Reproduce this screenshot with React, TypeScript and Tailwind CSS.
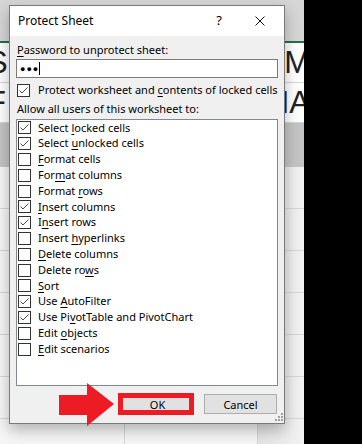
import * as React from "react";

// rows of the "Allow all users" list, [before, mnemonic, after, checked]
const options: [string, string, string, boolean][] = [
  ["Select ", "l", "ocked cells", true],
  ["Select ", "u", "nlocked cells", true],
  ["", "F", "ormat cells", false],
  ["For", "m", "at columns", false],
  ["Format ", "r", "ows", false],
  ["", "I", "nsert columns", true],
  ["I", "n", "sert rows", true],
  ["Insert ", "h", "yperlinks", false],
  ["", "D", "elete columns", false],
  ["Delete ro", "w", "s", false],
  ["", "S", "ort", false],
  ["Use ", "A", "utoFilter", true],
  ["Use Pi", "v", "otTable and PivotChart", true],
  ["Edit ", "o", "bjects", false],
  ["", "E", "dit scenarios", false],
];

const CheckBox = ({ checked }: { checked: boolean }) => (
  <div className="w-[13px] h-[13px] shrink-0 border border-[#333333] bg-white flex items-center justify-center">
    {checked && (
      <svg width="11" height="11" viewBox="0 0 11 11">
        <path d="M1.5 5.5 L4 8 L9.5 2.5" fill="none" stroke="#4d4d4d" strokeWidth="1" />
      </svg>
    )}
  </div>
);

const Mnemonic = ({ a, m, b }: { a: string; m: string; b: string }) => (
  <span className="whitespace-nowrap">
    {a}
    <span className="underline underline-offset-[2px]">{m}</span>
    {b}
  </span>
);

const SheetRow = ({ left, right }: { left?: string; right?: string }) => (
  <div className="h-[40px] shrink-0 bg-white border-b border-[#d4d4d4] flex items-center overflow-hidden text-[31px] leading-none text-[#222] font-['Liberation_Sans',sans-serif]">
    <span className="-ml-[13px]">{left}</span>
    <span className="ml-auto -mr-[6px]">{right}</span>
  </div>
);

const GridRow = () => (
  <div className="h-[42px] shrink-0 flex border-b border-[#d6d6d6] bg-[#f6f6f6]">
    <div className="w-[125px] border-r border-[#d6d6d6]" />
    <div className="w-[133px] border-r border-[#d6d6d6]" />
    <div className="flex-1 bg-gradient-to-r from-[#e4e4e4] to-[#f2f2f2]" />
  </div>
);

export default function App() {
  return (
    <div className="relative w-[362px] h-[444px] overflow-hidden bg-black flex font-['Noto_Sans',sans-serif]">
      {/* spreadsheet behind the dialog */}
      <div className="w-[304px] h-full flex flex-col overflow-hidden bg-[#f6f6f6]">
        <div className="h-[41px] shrink-0 bg-[#d6d6d6]" />
        <div className="h-[2px] shrink-0 bg-[#217346]" />
        <SheetRow left="S" right="M" />
        <SheetRow left="F" right="IA" />
        <div className="h-[44px] shrink-0 bg-[#c4c4c4]" />
        {Array.from({ length: 7 }).map((_, i) => (
          <GridRow key={i} />
        ))}
      </div>

      {/* Protect Sheet dialog */}
      <div className="absolute left-[9px] top-[5px] w-[276px] h-[419px] border border-[#7a7a7a] bg-[#f0f0f0] flex flex-col text-[11px] text-black shadow-[0_6px_14px_rgba(0,0,0,0.28)]">
        <div className="h-[30px] shrink-0 bg-white flex items-center pl-[8px] text-[12px]">
          <span>Protect Sheet</span>
          <span className="ml-auto mr-[33px] text-[13px]">?</span>
          <svg width="10" height="10" viewBox="0 0 10 10" className="mr-[19px]">
            <path d="M0.5 0.5 L9.5 9.5 M9.5 0.5 L0.5 9.5" stroke="#111" strokeWidth="1" />
          </svg>
        </div>

        <div className="flex flex-col px-[6px] pt-[6px]">
          <div className="h-[16px] flex items-center pl-[1px]">
            <Mnemonic a="" m="P" b="assword to unprotect sheet:" />
          </div>
          <div className="mt-[1px] h-[19px] border border-[#7a7a7a] bg-white flex items-center pl-[3px]">
            <span className="text-[9px] tracking-[1px]">●●●</span>
            <div className="w-[1px] h-[13px] bg-black" />
          </div>
          <div className="mt-[5px] h-[14px] flex items-center gap-[8px] pl-[1px]">
            <CheckBox checked />
            <Mnemonic a="Protect worksheet and " m="c" b="ontents of locked cells" />
          </div>
          <div className="mt-[4px] h-[16px] flex items-center pl-[1px]">
            <span className="whitespace-nowrap">Allow all users of this worksheet to:</span>
          </div>
          <div className="mt-[2px] h-[267px] border border-[#828790] bg-white flex flex-col">
            {options.map(([a, m, b, checked], i) => (
              <div key={i} className="h-[15.8px] shrink-0 flex items-center gap-[7px] pl-[1px]">
                <CheckBox checked={checked} />
                <Mnemonic a={a} m={m} b={b} />
              </div>
            ))}
          </div>
          <div className="mt-[8px] flex justify-end gap-[10px] pr-[1px]">
            <button className="w-[73px] h-[20px] border border-[#adadad] bg-[#e1e1e1] text-[11px] leading-none">
              OK
            </button>
            <button className="w-[73px] h-[20px] border border-[#adadad] bg-[#e1e1e1] text-[11px] leading-none">
              Cancel
            </button>
          </div>
        </div>

        {/* size grip */}
        <svg width="8" height="8" viewBox="0 0 8 8" className="absolute right-[1px] bottom-[2px]">
          <rect x="6" y="0" width="2" height="2" fill="#a0a0a0" />
          <rect x="3" y="3" width="2" height="2" fill="#a0a0a0" />
          <rect x="6" y="3" width="2" height="2" fill="#a0a0a0" />
          <rect x="0" y="6" width="2" height="2" fill="#a0a0a0" />
          <rect x="3" y="6" width="2" height="2" fill="#a0a0a0" />
          <rect x="6" y="6" width="2" height="2" fill="#a0a0a0" />
        </svg>
      </div>

      {/* annotation: red box round OK and arrow */}
      <div className="absolute left-[118px] top-[393px] w-[76px] h-[22px] border-[5px] border-[#ed1c24]" />
      <svg width="56" height="44" viewBox="0 0 56 44" className="absolute left-[59px] top-[383px]">
        <polygon points="0,12 28,12 28,0 55,21 28,43 28,32 0,32" fill="#ed1c24" />
      </svg>
    </div>
  );
}
